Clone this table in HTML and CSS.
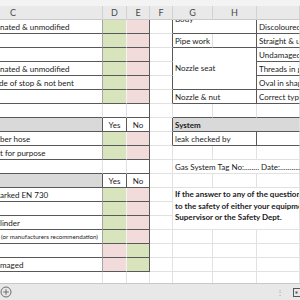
FILE: index.html
```html
<!DOCTYPE html>
<html>
<head>
<meta charset="utf-8">
<link rel="stylesheet" href="styles.css">
</head>
<body>
<div class="app">
  <div class="topstrip"></div>
  <div class="colhead">
    <div class="h hc">C</div>
    <div class="h">D</div>
    <div class="h">E</div>
    <div class="h">F</div>
    <div class="h">G</div>
    <div class="h">H</div>
    <div class="h"></div>
  </div>
  <div class="sheet">
    <!-- row 1 -->
    <div class="c cc bb bm"><span>nated &amp; unmodified</span></div>
    <div class="c g bb"></div>
    <div class="c p bb br"></div>
    <div class="c br"></div>
    <div class="c s2 bb br body"><span>Body</span></div>
    <div class="c bb">Discoloured</div>
    <!-- row 2 -->
    <div class="c cc bb bm"></div>
    <div class="c g bb"></div>
    <div class="c p bb br"></div>
    <div class="c br"></div>
    <div class="c bb">Pipe work</div>
    <div class="c bb br"></div>
    <div class="c bb">Straight &amp; undamaged</div>
    <!-- row 3 -->
    <div class="c cc bb bm"></div>
    <div class="c g bb"></div>
    <div class="c p bb br"></div>
    <div class="c br"></div>
    <div class="c s2 r3 bb br mid">Nozzle seat</div>
    <div class="c bb">Undamaged, no cracks</div>
    <!-- row 4 -->
    <div class="c cc bb bm"><span>nated &amp; unmodified</span></div>
    <div class="c g bb"></div>
    <div class="c p bb br"></div>
    <div class="c br"></div>
    <div class="c bb">Threads in good order</div>
    <!-- row 5 -->
    <div class="c cc bb bm"><span class="cut">de of stop &amp; not bent</span></div>
    <div class="c g bb"></div>
    <div class="c p bb br"></div>
    <div class="c br"></div>
    <div class="c bb">Oval in shape</div>
    <!-- row 6 -->
    <div class="c cc bb bm"></div>
    <div class="c g bb"></div>
    <div class="c p bb br"></div>
    <div class="c br"></div>
    <div class="c s2 bb br">Nozzle &amp; nut</div>
    <div class="c bb">Correct type, size</div>
    <!-- row 7 -->
    <div class="c cc bb"></div>
    <div class="c bb"></div>
    <div class="c bb br"></div>
    <div class="c"></div>
    <div class="c bb"></div>
    <div class="c bb"></div>
    <div class="c bb"></div>
    <!-- row 8 -->
    <div class="c cc gr bb br"></div>
    <div class="c bb br ctr">Yes</div>
    <div class="c bb br ctr">No</div>
    <div class="c br"></div>
    <div class="c s3 gr bb b">System</div>
    <!-- row 9 -->
    <div class="c cc bb bm"><span>ber hose</span></div>
    <div class="c g bb"></div>
    <div class="c p bb br"></div>
    <div class="c br"></div>
    <div class="c s2 bb br">leak checked by</div>
    <div class="c bb"></div>
    <!-- row 10 -->
    <div class="c cc bb bm"><span>t for purpose</span></div>
    <div class="c g bb"></div>
    <div class="c p bb br"></div>
    <div class="c"></div>
    <div class="c"></div>
    <div class="c"></div>
    <div class="c"></div>
    <!-- row 11 -->
    <div class="c cc bb"></div>
    <div class="c bb"></div>
    <div class="c bb br"></div>
    <div class="c"></div>
    <div class="c s3 nw">Gas System Tag No:........ Date:...............</div>
    <!-- row 12 -->
    <div class="c cc gr bb br"></div>
    <div class="c bb br ctr">Yes</div>
    <div class="c bb br ctr">No</div>
    <div class="c"></div>
    <div class="c"></div>
    <div class="c"></div>
    <div class="c"></div>
    <!-- row 13 -->
    <div class="c cc bb bm"><span>arked EN 730</span></div>
    <div class="c g bb"></div>
    <div class="c p bb br"></div>
    <div class="c"></div>
    <div class="c s3 r3 b note"><span>If the answer to any of the questions is No, or you have concerns</span><span>to the safety of either your equipment or the system, contact your</span><span>Supervisor or the Safety Dept.</span></div>
    <!-- row 14 -->
    <div class="c cc bb bm"></div>
    <div class="c g bb"></div>
    <div class="c p bb br"></div>
    <div class="c"></div>
    <!-- row 15 -->
    <div class="c cc bb bm"><span>linder</span></div>
    <div class="c g bb"></div>
    <div class="c p bb br"></div>
    <div class="c"></div>
    <!-- row 16 -->
    <div class="c cc bb bm sm"><span>(or manufacturers recommendation)</span></div>
    <div class="c g bb"></div>
    <div class="c p bb br"></div>
    <div class="c"></div>
    <div class="c"></div>
    <div class="c"></div>
    <div class="c"></div>
    <!-- row 17 -->
    <div class="c cc bb bm"></div>
    <div class="c p bb"></div>
    <div class="c g bb br"></div>
    <div class="c"></div>
    <div class="c"></div>
    <div class="c"></div>
    <div class="c"></div>
    <!-- row 18 -->
    <div class="c cc bb bm"><span>maged</span></div>
    <div class="c p bb"></div>
    <div class="c g bb br"></div>
    <div class="c"></div>
    <div class="c"></div>
    <div class="c"></div>
    <div class="c"></div>
    <!-- row 19 -->
    <div class="c cc"></div>
    <div class="c"></div>
    <div class="c"></div>
    <div class="c"></div>
    <div class="c"></div>
    <div class="c"></div>
    <div class="c"></div>
  </div>
  <div class="tabs">
    <svg class="addsheet" width="12" height="12" viewBox="0 0 12 12">
      <circle cx="6" cy="6" r="5" fill="none" stroke="#6e6e6e" stroke-width="1"/>
      <path d="M6 3.2v5.6M3.2 6h5.6" stroke="#6e6e6e" stroke-width="1"/>
    </svg>
    <div class="spacer"></div>
    <div class="dots">⋮</div>
    <svg class="view" width="8" height="11" viewBox="0 0 8 11">
      <rect x="1.5" y="1.5" width="8" height="8" fill="none" stroke="#555" stroke-width="1"/>
      <rect x="3.5" y="4.5" width="2" height="2" fill="#555"/>
    </svg>
  </div>
</div>
</body>
</html>
```

FILE: styles.css
```css
html, body {
  margin: 0;
  padding: 0;
  background: #ffffff;
}
.app {
  width: 300px;
  height: 300px;
  overflow: hidden;
  display: flex;
  flex-direction: column;
  font-family: Lato, "Open Sans", sans-serif;
  color: #1a1a1a;
}
.topstrip {
  height: 6px;
  background: #f3f3f3;
  flex: none;
}
.colhead {
  flex: none;
  display: grid;
  grid-template-columns: 103px 24px 23px 23px 40px 44px 43px;
  background: #e9e9e9;
  border-bottom: 1px solid #c9c9c9;
  box-sizing: border-box;
  height: 14px;
}
.h {
  box-sizing: border-box;
  border-right: 1px solid #d2d2d2;
  font-size: 9px;
  line-height: 14px;
  text-align: center;
  color: #4a4a4a;
}
.hc {
  text-align: left;
  padding-left: 10px;
}
.sheet {
  flex: 1;
  overflow: hidden;
  display: grid;
  grid-template-columns: 103px 24px 23px 23px 40px 44px 43px;
  grid-template-rows: repeat(19, 14px);
}
.c {
  box-sizing: border-box;
  border-right: 1px solid #e1e1e1;
  border-bottom: 1px solid #e1e1e1;
  font-size: 8px;
  line-height: 10px;
  padding: 0 2px 1px 2px;
  display: flex;
  align-items: flex-end;
  white-space: nowrap;
  overflow: hidden;
}
.cc {
  padding-left: 0;
}
.cut {
  margin-left: -1px;
}
.nw {
  overflow: visible;
}
.g { background: #d8e4bc; }
.p { background: #f2dcdb; }
.gr { background: #d9d9d9; }
.bb { border-bottom-color: #595959; }
.br { border-right-color: #595959; }
.bm { border-right-color: #a5a5a5; }
.g.bb:not(.br), .p.bb:not(.br) { border-right-color: #f4f4f4; }
.s2 { grid-column: span 2; }
.s3 { grid-column: span 3; }
.r3 { grid-row: span 3; }
.mid { align-items: center; }
.ctr { justify-content: center; }
.b { font-weight: 700; }
.sm { font-size: 6.2px; padding-left: 1px; padding-right: 0; }
.body { align-items: flex-start; }
.body span { margin-top: -6px; }
.note {
  flex-direction: column;
  align-items: flex-start;
  justify-content: flex-start;
  padding-top: 1px;
  line-height: 11.5px;
  font-size: 8px;
}
.tabs {
  flex: none;
  height: 17px;
  box-sizing: border-box;
  border-top: 1px solid #c8c8c8;
  background: #e8e8e8;
  display: flex;
  align-items: center;
}
.addsheet {
  flex: none;
}
.spacer { flex: 1; }
.dots {
  font-size: 8px;
  color: #9a9a9a;
  margin-right: 8px;
}
.view {
  flex: none;
}
```
